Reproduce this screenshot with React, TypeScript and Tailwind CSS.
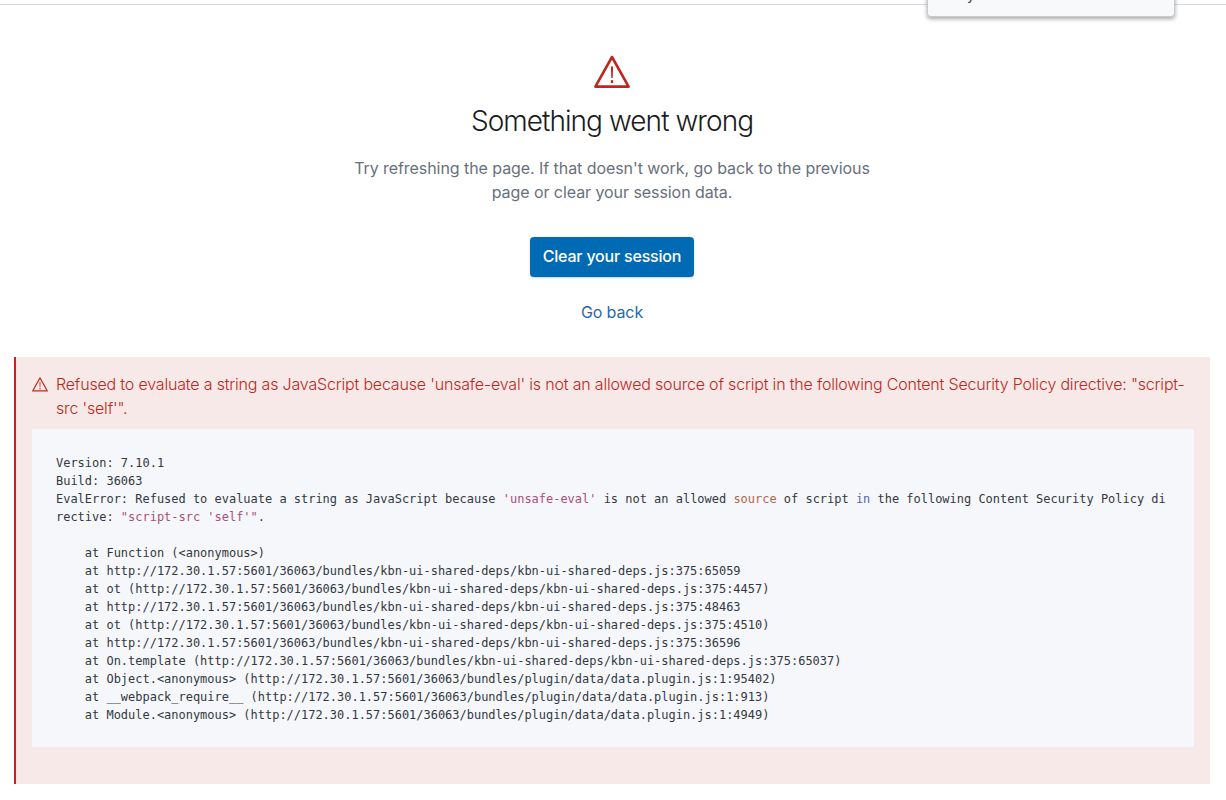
function Warn({ className }: { className: string }) {
  return (
    <svg viewBox="0 0 36 34" fill="none" className={className} aria-hidden="true">
      <path d="M18 2 L34.6 31.6 H1.4 Z" stroke="currentColor" strokeWidth="2.6" strokeLinejoin="round" />
      <path d="M16.9 11.5 H19.1 L18.7 23 H17.3 Z" fill="currentColor" />
      <path d="M18 25.2 V28" stroke="currentColor" strokeWidth="2.4" />
    </svg>
  );
}

const S = ({ children }: { children: string }) => <span className="text-[#a8507a]">{children}</span>;
const O = ({ children }: { children: string }) => <span className="text-[#b5654a]">{children}</span>;
const K = ({ children }: { children: string }) => <span className="text-[#5a64b0]">{children}</span>;

const trace = [
  "    at Function (<anonymous>)",
  "    at http://172.30.1.57:5601/36063/bundles/kbn-ui-shared-deps/kbn-ui-shared-deps.js:375:65059",
  "    at ot (http://172.30.1.57:5601/36063/bundles/kbn-ui-shared-deps/kbn-ui-shared-deps.js:375:4457)",
  "    at http://172.30.1.57:5601/36063/bundles/kbn-ui-shared-deps/kbn-ui-shared-deps.js:375:48463",
  "    at ot (http://172.30.1.57:5601/36063/bundles/kbn-ui-shared-deps/kbn-ui-shared-deps.js:375:4510)",
  "    at http://172.30.1.57:5601/36063/bundles/kbn-ui-shared-deps/kbn-ui-shared-deps.js:375:36596",
  "    at On.template (http://172.30.1.57:5601/36063/bundles/kbn-ui-shared-deps/kbn-ui-shared-deps.js:375:65037)",
  "    at Object.<anonymous> (http://172.30.1.57:5601/36063/bundles/plugin/data/data.plugin.js:1:95402)",
  "    at __webpack_require__ (http://172.30.1.57:5601/36063/bundles/plugin/data/data.plugin.js:1:913)",
  "    at Module.<anonymous> (http://172.30.1.57:5601/36063/bundles/plugin/data/data.plugin.js:1:4949)",
];

export default function App() {
  return (
    <div className="relative h-[800px] overflow-hidden bg-white font-['Inter',sans-serif]">
      <div className="mt-1 h-px bg-[#d3dae6]" />
      <div className="absolute left-[927px] top-[-60px] flex h-[77px] w-[248px] items-end rounded-[4px] border border-[#c6cad1] bg-[#f8f9fb] pb-[13px] pl-[39px] text-sm leading-4 text-[#343741] shadow-[0_2px_4px_rgba(0,0,0,0.35)]">
        <span>y</span>
      </div>
      <main className="flex flex-col items-center pr-[2px] pt-[50px]">
        <Warn className="h-[34px] w-[36px] text-[#bd271e]" />
        <h1 className="mt-[12px] text-[28px] font-light leading-[40px] tracking-[-0.95px] text-[#1a1c21]">Something went wrong</h1>
        <p className="mt-[15px] w-[540px] text-center text-base leading-6 tracking-[-0.065px] text-[#69707d]">
          Try refreshing the page. If that doesn't work, go back to the previous page or clear your session data.
        </p>
        <button className="mt-[33px] h-10 w-[164px] rounded-[4px] bg-[#006bb4] pb-[3px] text-base font-medium tracking-[-0.2px] text-white shadow-[0_1px_2px_rgba(0,0,0,0.2)]">
          Clear your session
        </button>
        <a className="mt-[23px] text-base leading-6 tracking-[-0.1px] text-[#2a68ad]">Go back</a>
      </main>
      <section className="ml-[14px] mr-[16px] mt-[33px] h-[427px] border-l-2 border-[#bd271e] bg-[#f7e9e7] pl-[16px] pr-[16px] pt-[15px]">
        <div className="flex gap-2 text-base font-light leading-6 tracking-[-0.18px] text-[#bd271e]">
          <Warn className="mt-[5px] h-[15px] w-[16px] shrink-0" />
          <p>
            Refused to evaluate a string as JavaScript because 'unsafe-eval' is not an allowed source of script in the following Content Security Policy directive: "script-src 'self'".
          </p>
        </div>
        <div className="mt-[9px] h-[318px] whitespace-pre bg-[#f5f7fa] pb-[23px] pl-6 pr-6 pt-[25px] font-['DejaVu_Sans_Mono',monospace] text-[11.97px] leading-[18px] text-[#343741]">
          <div>Version: 7.10.1</div>
          <div>Build: 36063</div>
          <div>
            {"EvalError: Refused to evaluate a string as JavaScript because "}
            <S>'unsafe-eval'</S>
            {" is not an allowed "}
            <O>source</O>
            {" of script "}
            <K>in</K>
            {" the following Content Security Policy di"}
          </div>
          <div>
            {"rective: "}
            <S>{`"script-src 'self'"`}</S>
            {"."}
          </div>
          <div className="h-[18px]" />
          {trace.map((line) => (
            <div key={line}>{line}</div>
          ))}
        </div>
      </section>
    </div>
  );
}
